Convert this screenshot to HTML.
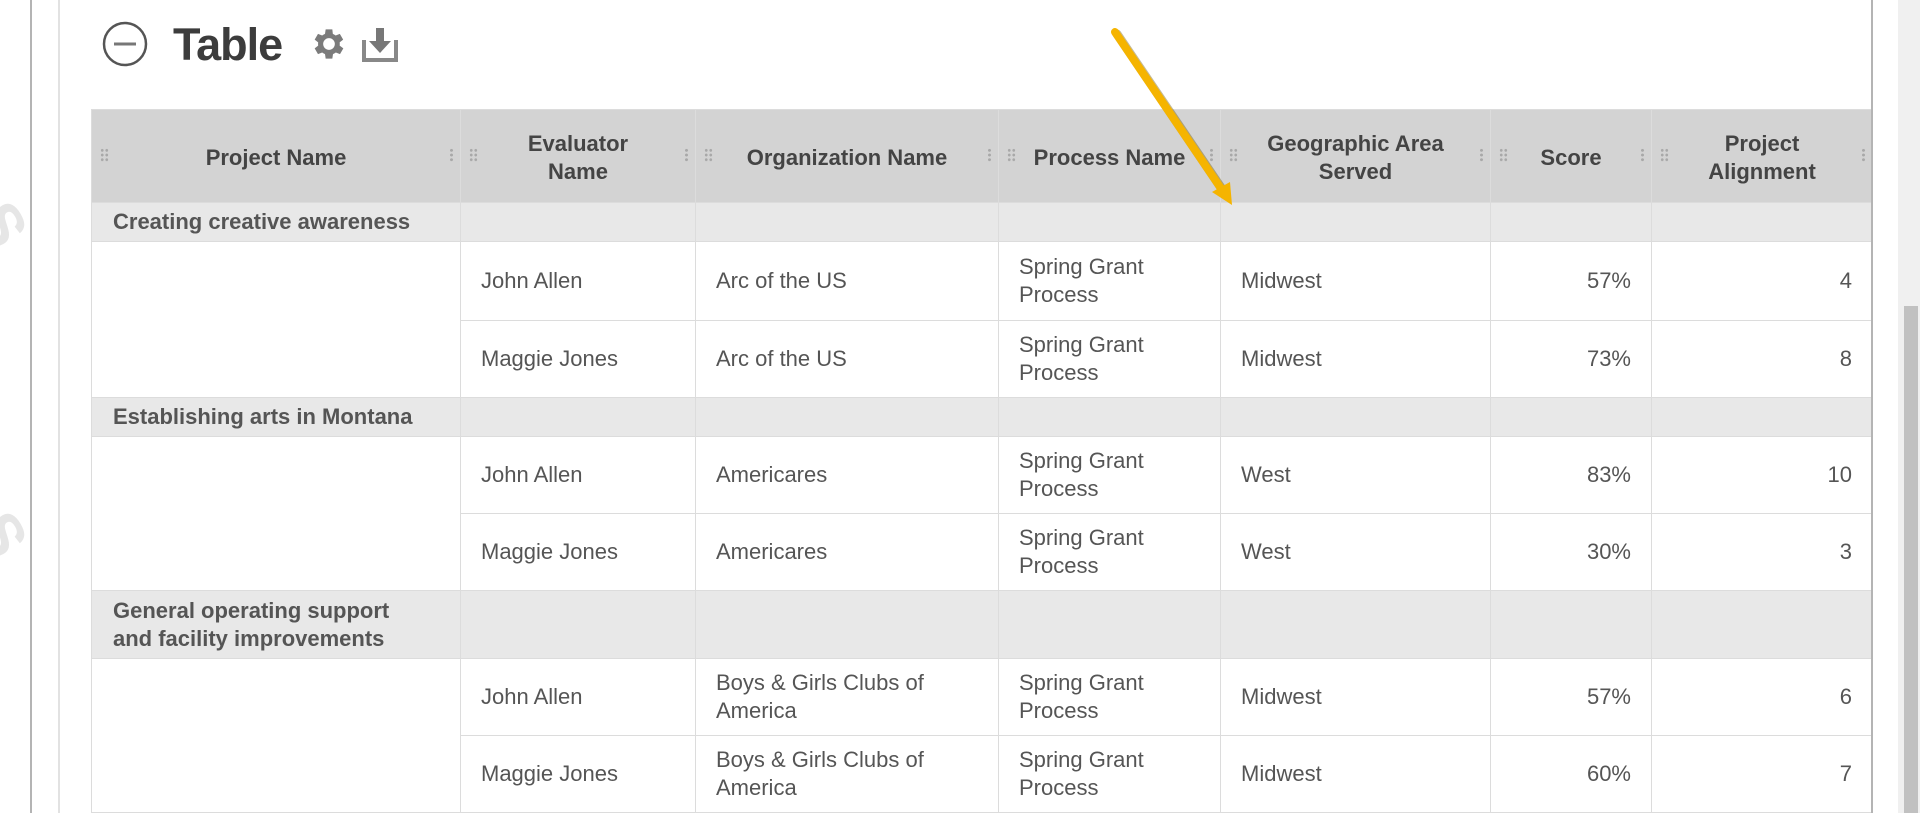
<!DOCTYPE html>
<html><head><meta charset="utf-8">
<style>
html,body{margin:0;padding:0;width:1920px;height:813px;overflow:hidden;background:#fff;font-family:"Liberation Sans",sans-serif;}
.vl1{position:absolute;left:30px;top:0;width:2px;height:813px;background:#b4b4b4;}
.vl2{position:absolute;left:58px;top:0;width:2px;height:813px;background:#e2e2e2;}
.vr{position:absolute;left:1871px;top:0;width:2px;height:813px;background:#b4b4b4;}
.sb{position:absolute;left:1898px;top:0;width:22px;height:813px;background:#f0f0f0;}
.thumb{position:absolute;left:1904px;top:306px;width:14px;height:507px;background:#c1c1c1;}
.title{position:absolute;left:173px;top:19px;font-size:45px;font-weight:bold;color:#3c3c3c;letter-spacing:-1px;}
table{position:absolute;left:91px;top:109px;border-collapse:collapse;table-layout:fixed;width:1781px;}
td,th{border:1px solid #dcdcdc;font-size:22px;color:#555;padding:0 20px;line-height:28px;}
th{background:#d3d3d3;color:#444;font-weight:bold;height:89px;position:relative;text-align:center;padding-top:3px;box-sizing:content-box;}
tr.g td{background:#e8e8e8;font-weight:bold;color:#555;padding-left:21px;}
.r{text-align:right;}
.dl,.dr{position:absolute;top:38px;width:9px;height:14px;background-image:radial-gradient(circle,#a8a8a8 1.2px,transparent 1.6px);background-size:4.5px 4.7px;}
.dl{left:8px;}
.dr{right:6px;width:5px;}
.wm{position:absolute;color:#e6e6e6;font-weight:bold;font-size:60px;transform:rotate(60deg);}
</style></head><body>
<div class="wm" style="left:-18px;top:190px;">S</div>
<div class="wm" style="left:-18px;top:500px;">S</div>
<div class="vl1"></div><div class="vl2"></div>
<svg style="position:absolute;left:100px;top:20px" width="50" height="50"><circle cx="25" cy="24" r="21" fill="none" stroke="#555" stroke-width="2.5"/><line x1="14" y1="24" x2="36" y2="24" stroke="#777" stroke-width="3"/></svg>
<div class="title">Table</div>
<svg style="position:absolute;left:309px;top:24px" width="40" height="40" viewBox="0 0 24 24"><path fill="#7b7b7b" d="M19.4 13a7.5 7.5 0 0 0 0-2l2.1-1.6-2-3.5-2.5 1a7 7 0 0 0-1.7-1L15 3.2h-4l-.4 2.7a7 7 0 0 0-1.7 1l-2.5-1-2 3.5L6.5 11a7.5 7.5 0 0 0 0 2l-2.1 1.6 2 3.5 2.5-1a7 7 0 0 0 1.7 1l.4 2.7h4l.4-2.7a7 7 0 0 0 1.7-1l2.5 1 2-3.5zM13 15.5a3.5 3.5 0 1 1 0-7 3.5 3.5 0 0 1 0 7z" transform="translate(-1 0)"/></svg>
<svg style="position:absolute;left:360px;top:24px" width="40" height="40" viewBox="0 0 40 40"><path d="M4 16v20h32V16" fill="none" stroke="#888" stroke-width="4"/><rect x="16" y="4" width="8" height="14" fill="#777"/><path d="M9 17h22L20 29z" fill="#777"/></svg>
<table>
<colgroup><col style="width:369px"><col style="width:235px"><col style="width:303px"><col style="width:222px"><col style="width:270px"><col style="width:161px"><col style="width:221px"></colgroup>
<tr><th><span class="dl"></span>Project Name<span class="dr"></span></th><th><span class="dl"></span>Evaluator<br>Name<span class="dr"></span></th><th><span class="dl"></span>Organization Name<span class="dr"></span></th><th><span class="dl"></span>Process Name<span class="dr"></span></th><th><span class="dl"></span>Geographic Area<br>Served<span class="dr"></span></th><th><span class="dl"></span>Score<span class="dr"></span></th><th><span class="dl"></span>Project<br>Alignment<span class="dr"></span></th></tr>
<tr class="g" style="height:39px"><td>Creating creative awareness</td><td></td><td></td><td></td><td></td><td></td><td></td></tr>
<tr style="height:79px"><td rowspan="2"></td><td>John Allen</td><td>Arc of the US</td><td>Spring Grant<br>Process</td><td>Midwest</td><td class="r">57%</td><td class="r">4</td></tr>
<tr style="height:77px"><td>Maggie Jones</td><td>Arc of the US</td><td>Spring Grant<br>Process</td><td>Midwest</td><td class="r">73%</td><td class="r">8</td></tr>
<tr class="g" style="height:39px"><td>Establishing arts in Montana</td><td></td><td></td><td></td><td></td><td></td><td></td></tr>
<tr style="height:77px"><td rowspan="2"></td><td>John Allen</td><td>Americares</td><td>Spring Grant<br>Process</td><td>West</td><td class="r">83%</td><td class="r">10</td></tr>
<tr style="height:77px"><td>Maggie Jones</td><td>Americares</td><td>Spring Grant<br>Process</td><td>West</td><td class="r">30%</td><td class="r">3</td></tr>
<tr class="g" style="height:68px"><td>General operating support<br>and facility improvements</td><td></td><td></td><td></td><td></td><td></td><td></td></tr>
<tr style="height:77px"><td rowspan="2"></td><td>John Allen</td><td>Boys &amp; Girls Clubs of<br>America</td><td>Spring Grant<br>Process</td><td>Midwest</td><td class="r">57%</td><td class="r">6</td></tr>
<tr style="height:77px"><td>Maggie Jones</td><td>Boys &amp; Girls Clubs of<br>America</td><td>Spring Grant<br>Process</td><td>Midwest</td><td class="r">60%</td><td class="r">7</td></tr>
</table>
<div class="vr"></div>
<div class="sb"></div><div class="thumb"></div>
<svg style="position:absolute;left:0;top:0" width="1920" height="813">
<line x1="1115" y1="32" x2="1222" y2="190" stroke="#6a5200" stroke-opacity="0.4" stroke-width="9" stroke-linecap="round" transform="translate(2,2)"/>
<line x1="1115" y1="32" x2="1222" y2="190" stroke="#f5b400" stroke-width="8" stroke-linecap="round"/>
<path d="M1212 192 L1232 205 L1230 182 Z" fill="#f5b400"/>
</svg>
</body></html>
